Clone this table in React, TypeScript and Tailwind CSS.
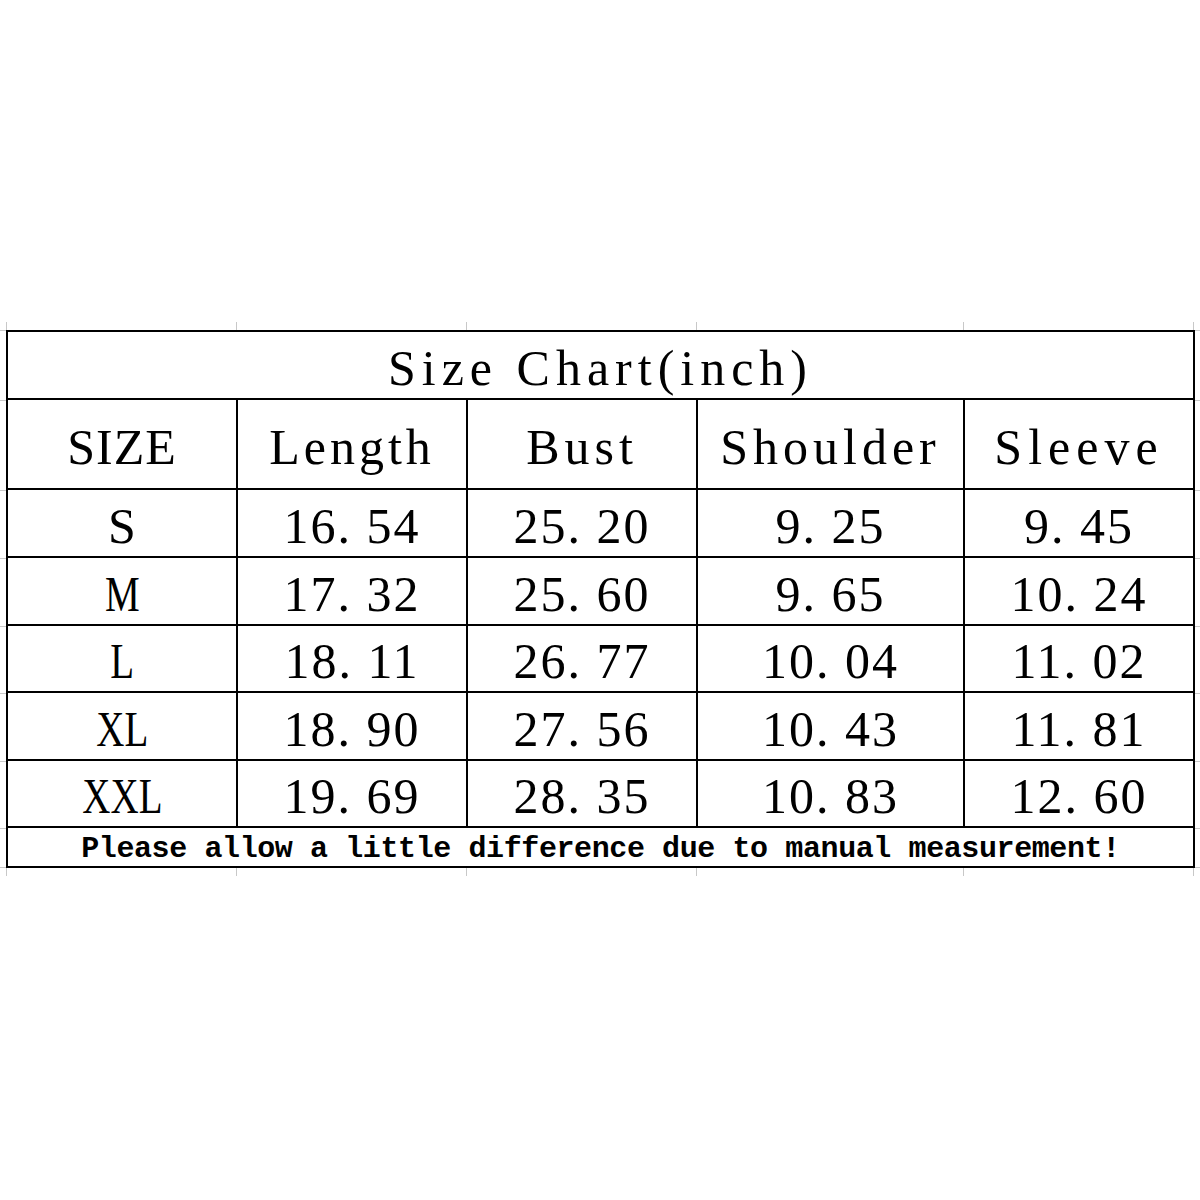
import React from 'react'

const serif = "font-['Liberation_Serif',serif]"

const rows = [
    { size: 'S', values: ['16.54', '25.20', '9.25', '9.45'] },
    { size: 'M', values: ['17.32', '25.60', '9.65', '10.24'] },
    { size: 'L', values: ['18.11', '26.77', '10.04', '11.02'] },
    { size: 'XL', values: ['18.90', '27.56', '10.43', '11.81'] },
    { size: 'XXL', values: ['19.69', '28.35', '10.83', '12.60'] },
]

const rowHeights = ['h-[68px]', 'h-[68px]', 'h-[67px]', 'h-[68px]', 'h-[67px]']

const headers = [
    { label: 'SIZE', tracking: 'tracking-[1px]' },
    { label: 'Length', tracking: 'tracking-[4px]' },
    { label: 'Bust', tracking: 'tracking-[5px]' },
    { label: 'Shoulder', tracking: 'tracking-[5px]' },
    { label: 'Sleeve', tracking: 'tracking-[6px]' },
]

const Cell: React.FC<{ children: React.ReactNode; className?: string }> = ({ children, className = '' }) => (
    <div className={`flex items-center justify-center border-r-2 border-b-2 border-black pt-[5px] text-[50px] leading-none ${className}`}>
        {children}
    </div>
)

const TickRow: React.FC = () => (
    <div className="flex h-[8px]">
        <div className="w-[7px] border-r border-[#c8c8c8]" />
        <div className="w-[230px] border-r border-[#c8c8c8]" />
        <div className="w-[230px] border-r border-[#c8c8c8]" />
        <div className="w-[230px] border-r border-[#c8c8c8]" />
        <div className="w-[267px] border-r border-[#c8c8c8]" />
        <div className="w-[230px] border-r border-[#c8c8c8]" />
    </div>
)

const Gutter: React.FC<{ width: string }> = ({ width }) => (
    <div className={`flex flex-col ${width}`}>
        <div className="h-[70px] border-t border-[#c8c8c8]" />
        <div className="h-[90px] border-t border-[#c8c8c8]" />
        {rowHeights.map((h, i) => (
            <div key={i} className={`${h} border-t border-[#c8c8c8]`} />
        ))}
        <div className="h-[40px] border-y border-[#c8c8c8]" />
    </div>
)

const App: React.FC = () => {
    return (
        <div className={`w-[1200px] h-[1200px] bg-white text-black ${serif}`}>
            <div className="h-[322px]" />
            <TickRow />

            <div className="flex">
                <Gutter width="w-[6px]" />

                {/* Table */}
                <div className="w-[1189px] border-l-2 border-t-2 border-black">
                    <Cell className="h-[68px] tracking-[6px]">Size Chart(inch)</Cell>

                    <div className="grid grid-cols-[230px_230px_230px_267px_230px]">
                        {headers.map((h) => (
                            <Cell key={h.label} className={`h-[90px] ${h.tracking}`}>
                                {h.label}
                            </Cell>
                        ))}

                        {rows.map((row, r) => (
                            <React.Fragment key={row.size}>
                                <Cell className={rowHeights[r]}>
                                    <span className={`inline-block ${row.size === 'S' ? '' : 'scale-x-[0.78]'}`}>
                                        {row.size}
                                    </span>
                                </Cell>
                                {row.values.map((v, i) => (
                                    <Cell key={i} className={`${rowHeights[r]} tracking-[2px] whitespace-pre`}>
                                        {v.replace('.', '. ')}
                                    </Cell>
                                ))}
                            </React.Fragment>
                        ))}
                    </div>

                    <div className="flex h-[40px] items-center justify-center border-r-2 border-b-2 border-black pt-[3px] font-['Liberation_Mono',monospace] text-[30px] font-bold leading-none tracking-[-0.4px]">
                        Please allow a little difference due to manual measurement!
                    </div>
                </div>

                <Gutter width="w-[5px]" />
            </div>

            <TickRow />
        </div>
    )
}

export default App
